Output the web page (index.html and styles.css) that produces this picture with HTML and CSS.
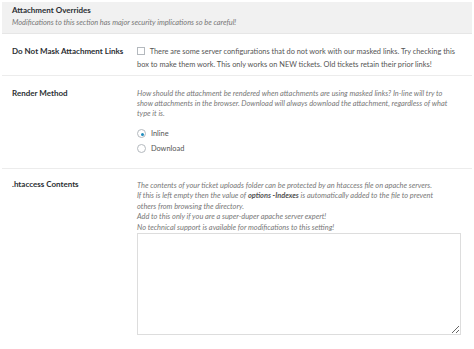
FILE: index.html
```html
<!DOCTYPE html>
<html lang="en">
<head>
    <meta charset="UTF-8">
    <meta name="viewport" content="width=device-width, initial-scale=1.0">
    <title>Attachment Overrides</title>
    <link rel="stylesheet" href="styles.css">
</head>
<body>
    <div class="section-head">
        <h3>Attachment Overrides</h3>
        <p>Modifications to this section has major security implications so be careful!</p>
    </div>

    <div class="row row-mask">
        <div class="label">Do Not Mask Attachment Links</div>
        <div class="field">
            <label class="check-text"><input type="checkbox" class="check"> There are some server configurations that do not work with our masked links. Try checking this box to make them work. This only works on NEW tickets. Old tickets retain their prior links!</label>
        </div>
    </div>

    <div class="row row-render">
        <div class="label">Render Method</div>
        <div class="field">
            <p class="desc">How should the attachment be rendered when attachments are using masked links? In-line will try to show attachments in the browser. Download will always download the attachment, regardless of what type it is.</p>
            <div class="radios">
                <label class="radio-line"><input type="radio" name="render" class="radio" checked> Inline</label>
                <label class="radio-line"><input type="radio" name="render" class="radio"> Download</label>
            </div>
        </div>
    </div>

    <div class="row row-htaccess">
        <div class="label">.htaccess Contents</div>
        <div class="field">
            <p class="desc desc-ht">The contents of your ticket uploads folder can be protected by an htaccess file on apache servers.<br>
            If this is left empty then the value of <b>options -Indexes</b> is automatically added to the file to prevent<br>
            others from browsing the directory.<br>
            Add to this only if you are a super-duper apache server expert!<br>
            No technical support is available for modifications to this setting!</p>
            <textarea class="ht-box"></textarea>
        </div>
    </div>
</body>
</html>
```

FILE: styles.css
```css
body { margin: 0; padding: 2px; font-family: Lato, "Open Sans", sans-serif; font-size: 7.4px; color: #2b2f33; background: #fff; }
p { margin: 0; }

.section-head { background: #f1f1f1; padding: 3px 10px 0; height: 28px; border-bottom: 1px solid #e6e6e6; }
.section-head h3 { margin: 0; font-size: 8px; font-weight: 700; line-height: 11px; }
.section-head p { font-style: italic; color: #777; line-height: 14px; }

.row { display: grid; grid-template-columns: 125px 1fr; padding: 0 12px 0 10px; border-bottom: 1px solid #ececec; }
.label { font-weight: 700; font-size: 8px; }
.field { color: #555; }

.row-mask { padding-top: 11px; height: 30px; }
.row-mask .label { line-height: 12px; }
.check-text { display: block; line-height: 13px; }
.check { appearance: none; width: 8px; height: 8px; margin: 0 3px 0 0; border: 1px solid #b4b9be; background: #fff; vertical-align: -1px; }

.row-render { padding-top: 10px; height: 82px; }
.row-render .label { line-height: 14px; }
.desc { font-style: italic; color: #777; line-height: 10px; padding-top: 3px; }
.radios { margin-top: 9px; display: flex; flex-direction: column; gap: 4px; }
.radio-line { line-height: 11px; }
.radio { appearance: none; width: 9px; height: 9px; margin: 0 3px 0 0; border: 1px solid #b4b9be; border-radius: 50%; background: #fff; vertical-align: -2px; position: relative; }
.radio:checked::after { content: ""; position: absolute; left: 2.5px; top: 2.5px; width: 3px; height: 3px; border-radius: 50%; background: #1e8cbe; }

.row-htaccess { padding-top: 9px; border-bottom: none; }
.row-htaccess .label { line-height: 12px; }
.desc-ht { line-height: 10.4px; padding-top: 3px; }
.desc-ht b { font-weight: 700; color: #555; }
.ht-box { display: block; width: 324px; height: 102px; margin-top: 0; box-sizing: border-box; border: 1px solid #ddd; font-family: inherit; }
```
